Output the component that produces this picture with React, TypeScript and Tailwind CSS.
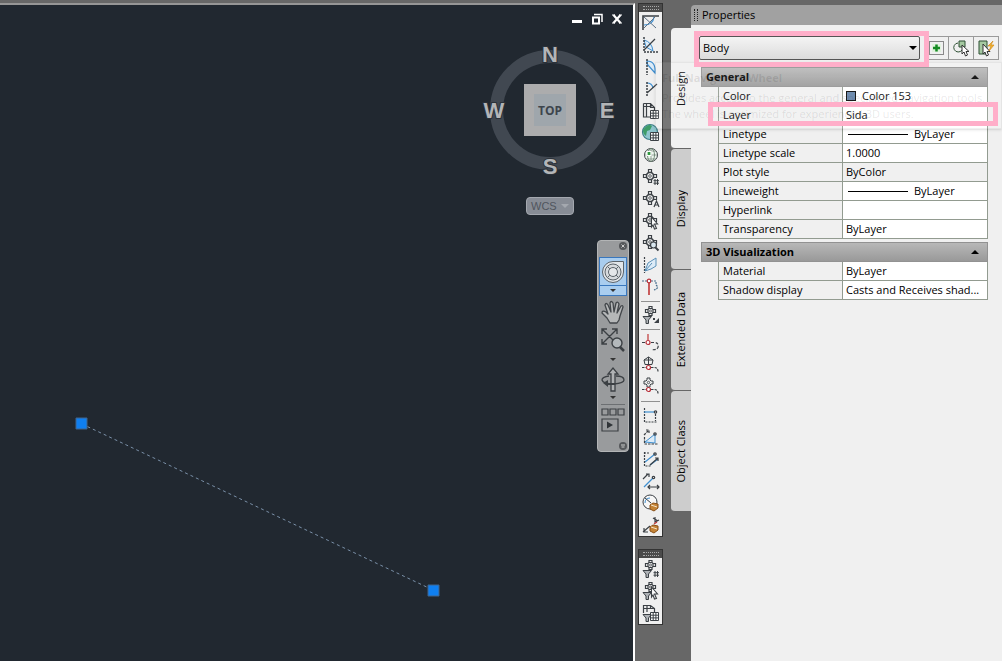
import { useState } from "react";
import type { ReactNode } from "react";

const DARK = "#3b4045";
const BLUE = "#3f8fd0";

type IconProps = { children: ReactNode };

const Icon = ({ children }: IconProps) => (
  <svg className="h-5 w-5" viewBox="0 0 20 20" fill="none" stroke={DARK} strokeWidth="1.2" aria-hidden="true">
    {children}
  </svg>
);

const Gear = () => (
  <>
    <path d="M7.500 5.500v-3h3v3M7.500 12.500v3h3v-3M5.500 7.500h-3v3h3M12.500 7.500h3v3h-3" />
    <path d="M5.500 7.500l2-2h3l2 2v3l-2 2h-3l-2-2z" strokeWidth="1.600" />
    <circle cx="9" cy="9" r="1.300" fill="#fff" strokeWidth=".8" />
  </>
);

const Grid = () => (
  <path d="M9.500 9.500h8v8h-8zM12.200 9.500v8M14.900 9.500v8M9.500 12.200h8M9.500 14.900h8" fill="#fff" strokeWidth="1" />
);

const Hash = () => <path d="M14 12v6M16.500 12v6M12.500 13.700h5.500M12.500 16.200h5.500" strokeWidth="1" />;

const Cursor = () => <path d="M10.500 6l6 7h-3l2 4.500-2 .5-1.500-4-1.500 2z" fill="#fff" strokeWidth="1.100" />;

const SmallFlower = () => (
  <>
    <path d="M8 3.500v-2h3v2M8 8.500v2h3v-2M7 4.500H4.500v3H7M12 4.500h2.500v3H12" />
    <path d="M7 4.500l1-1h3l1 1v3l-1 1H8l-1-1z" />
    <circle cx="9.500" cy="6" r="1" fill="#fff" strokeWidth=".8" />
  </>
);

const Filter = () => <path d="M2 11.500h8.500l-3 3.500v3.500H5V15z" fill="#aeb2b6" strokeWidth="1" />;

const Node = () => (
  <>
    <path d="M1 12.500h4M10 12.500h3q4 0 4 4" strokeDasharray="2.500 1" />
    <circle cx="7.500" cy="12.500" r="2" fill="#fff" stroke="#b8303a" />
  </>
);

const Brush = () => (
  <>
    <path d="M9 12l3-2 5 1v4l-4 3-4-2z" fill="#c58436" stroke="#8a5118" strokeWidth="1" />
    <path d="M10 12l6 2" stroke="#f3e3c8" strokeWidth="1" />
  </>
);

const toolGroups: { name: string; icon: ReactNode }[][] = [
  [
    { name: "Construct bearing", icon: <><path d="M2 17V3h16" strokeWidth="1.600" /><path d="M3 12q9 0 10-8" stroke={BLUE} /><path d="M3 4l12 11M14 4L3 15" stroke="#5e7185" strokeWidth="1" /></> },
    { name: "Construct angle", icon: <><path d="M3 5q8 2 9 11L5 12z" fill="#dcebf7" stroke={BLUE} strokeWidth="1" /><path d="M3 2v15h15" strokeDasharray="2 1" strokeWidth="1.500" /><path d="M3 15L14 4" /></> },
    { name: "Curve", icon: <><path d="M6 4q9 0 8 12L6 7z" fill="#dcebf7" stroke={BLUE} /><path d="M6 2v16" strokeDasharray="2 1" strokeWidth="1.500" /></> },
    { name: "Deflection", icon: <><path d="M6 4q5 0 6 5" stroke={BLUE} /><path d="M6 3v15" strokeDasharray="2 1" strokeWidth="1.500" /><path d="M6 14L16 5" /></> },
    { name: "Table layout", icon: <><path d="M2.500 2.500h7l4 4V10M2.500 2.500V16H9M5.500 2.500V16M2.500 5.500h8M9.500 2.500v4h4" /><Grid /></> },
    { name: "World grid", icon: <><circle cx="9" cy="9" r="7.500" fill="#8fc5ce" stroke="#3b7d87" /><path d="M2 7q5-7 9-4l-2 4-3 1-1 5q-3-2-3-6z" fill="#3d9c67" stroke="none" /><Grid /></> },
    { name: "Coordinate system", icon: <><circle cx="10" cy="10" r="6.500" fill="#edf7ef" strokeWidth="1" /><path d="M3.500 10h13M10 3.500v13M5 6h10M5 14h10" stroke="#829087" strokeWidth=".8" /><ellipse cx="10" cy="10" rx="3.500" ry="6.500" stroke="#68806d" strokeWidth=".9" /><path d="M6 6.500h4v4H6z" fill="#319940" stroke="#fff" /></> },
    { name: "Point number", icon: <><Gear /><Hash /></> },
    { name: "Point name", icon: <><Gear /><path d="M13 18l2.500-6 2.500 6M14 16h3" /></> },
    { name: "Point select", icon: <><Gear /><Cursor /></> },
    { name: "Point search", icon: <><Gear /><circle cx="12.500" cy="12" r="3" fill="#d9e7ef" /><path d="M14.500 14.500l3 3" strokeWidth="2" /></> },
    { name: "Side shot", icon: <><path d="M3.500 2v16" strokeDasharray="2 1" /><path d="M4 16l3-8 8-5v8l-5 3zM4 16l7-8" fill="#dcebf7" stroke="#5b91b8" strokeWidth="1" /></> },
    { name: "Station offset", icon: <><path d="M8 5v13" stroke="#c03636" strokeWidth="1.600" /><path d="M1 4h5M10 4h5v4q4 3-2 5" strokeDasharray="2 1" stroke="#4a718f" /><circle cx="8" cy="4" r="1.800" fill="#fff" stroke="#b8303a" /></> },
  ],
  [{ name: "Point filter", icon: <><SmallFlower /><Filter /><path d="M12 13h2v2h-2zM18 13v5h-5z" fill={DARK} stroke="none" /></> }],
  [
    { name: "Zoom to point", icon: <><path d="M7 1v6" stroke="#c03636" /><path d="M1 9.500h3M10 9.500h3q5 0 4 5-2 3-6 2" strokeDasharray="3 1.500" /><circle cx="7" cy="9.500" r="2" fill="#fff" stroke="#b8303a" /></> },
    { name: "Instrument", icon: <><path d="M3 5l4.500-3L12 5l-1 4.500H4zM3 5h9M7.500 2v7" strokeWidth="1" /><Node /></> },
    { name: "Point object", icon: <><path d="M6 3V1h3v2l1 1h2v3h-2L9 8v2H6V8L5 7H3V4h2z" strokeWidth="1" /><circle cx="7.500" cy="5.500" r="1.200" strokeWidth=".8" /><Node /></> },
  ],
  [
    { name: "Distance", icon: <><path d="M3.500 3v14h13M14.500 9v7" strokeDasharray="2 1" /><path d="M3 7h10" stroke={BLUE} /><circle cx="14.500" cy="7" r="1.200" /></> },
    { name: "Inverse", icon: <><path d="M4 15l10-8v9z" fill="#dcebf7" stroke={BLUE} strokeWidth="1" /><path d="M3 8l4-4M5 3h3v3M3.500 10v7h14" strokeDasharray="2.500 1" /><circle cx="14" cy="7" r="1.200" /></> },
    { name: "Offset", icon: <><path d="M4 13L14 5M9 16l8-6" stroke={BLUE} /><path d="M3.500 3v14h7M3 4h6" strokeDasharray="2 1" /><circle cx="14" cy="5" r="1.200" /><path d="M9 16l8-7M14 9h3v3" /></> },
    { name: "Line distance", icon: <><path d="M2 8l5-5M5 3h3v3" /><path d="M3 16L12 7" stroke={BLUE} /><circle cx="12.500" cy="6.500" r="1.200" /><path d="M7 16h11M9 14l-2 2 2 2M16 14l2 2-2 2" /></> },
    { name: "Arc styling", icon: <><circle cx="9" cy="9" r="7" strokeWidth="1" fill="#f7f7f7" /><path d="M4 10q0-5 5-5" stroke={BLUE} strokeWidth="1" /><path d="M4 5l6 5" strokeWidth="1" /><Brush /></> },
    { name: "Line styling", icon: <><path d="M2 17l7-6M3 13v4h4M12 3l5 3M14 2v5l4-2" /><Brush /><path d="M13 9l3-2" stroke="#c03636" /></> },
  ],
];

const filterTools = [
  { name: "Filter number", icon: <><SmallFlower /><Filter /><Hash /></> },
  { name: "Filter select", icon: <><SmallFlower /><Filter /><Cursor /></> },
  { name: "Filter grid", icon: <><path d="M2.500 10V2.500h7l4 3V9M2.500 5.500h8M6 2.500V9M9.500 2.500v3h4" /><Filter /><Grid /></> },
];

type ToolBarProps = { label: string; groups: { name: string; icon: ReactNode }[][] };

const ToolBar = ({ label, groups }: ToolBarProps) => (
  <div role="toolbar" aria-label={label} className="border border-[#333] bg-[#efefef]">
    <div className="flex h-2 items-center justify-center bg-[#4b4b4b]">
      <span className="h-1 w-4 border-y border-dotted border-[#aaa]" />
    </div>
    {groups.map((group, i) => (
      <div key={i}>
        {i > 0 && (
          <div className="flex h-[6px] items-center px-[2px]">
            <div className="h-px flex-1 bg-[#909090]" />
          </div>
        )}
        {group.map((tool) => (
          <button key={tool.name} aria-label={tool.name} className="flex h-[22px] w-full items-center justify-center hover:bg-sky-100">
            <Icon>{tool.icon}</Icon>
          </button>
        ))}
      </div>
    ))}
  </div>
);

const Compass = () => (
  <svg className="absolute top-[35px] right-[13px] h-[140px] w-[140px] font-['Liberation_Sans',sans-serif]" viewBox="0 0 140 140">
    <circle cx="70" cy="70" r="53.500" fill="none" stroke="#414851" strokeWidth="13" />
    <g fill="#b3b5b7" stroke="#2b3139" strokeWidth="2" paintOrder="stroke" className="text-[22px] font-bold" textAnchor="middle">
      <text x="70" y="22">N</text>
      <text x="14" y="78">W</text>
      <text x="127" y="78">E</text>
      <text x="70" y="134">S</text>
    </g>
    <path d="M44 44h52v52H44z" fill="#acacad" />
    <path d="M54 54h32v32H54z" fill="#9fa6ac" />
    <text x="70" y="75" textAnchor="middle" fill="#3d444c" className="font-['Open_Sans',sans-serif] text-[12px] font-bold">TOP</text>
  </svg>
);

const NavArrow = () => (
  <svg className="h-1 w-1.5" viewBox="0 0 6 4" aria-hidden="true"><path d="M0 0h6L3 3z" fill="#333" /></svg>
);

const NavigationBar = () => (
  <div className="absolute top-[235px] right-[4px] flex h-[212px] w-8 flex-col items-center rounded border border-[#b3b5b6] bg-[#999b9d]">
    <button aria-label="Close navigation bar" className="self-end p-px">
      <svg className="h-2 w-2" viewBox="0 0 8 8"><circle cx="4" cy="4" r="4" fill="#55585b" /><path d="M2.500 2.500l3 3M5.500 2.500l-3 3" stroke="#ccc" /></svg>
    </button>
    <button aria-label="Full Navigation Wheel" className="mt-1.5 h-[29px] w-7 shrink-0 border border-[#3977bd] bg-[#a9cdef]">
      <svg className="m-auto h-6 w-6" viewBox="0 0 24 24" fill="#e2e6ea" stroke="#5c646b">
        <path d="M12 1.500h10.500V12A10.500 10.500 0 1 1 12 1.500z" />
        <circle cx="12" cy="12" r="8" fill="#d6dade" />
        <path d="M6.500 6.500l3 3M17.500 6.500l-3 3M6.500 17.500l3-3M17.500 17.500l-3-3" />
        <circle cx="12" cy="12" r="4.500" fill="#e4e7ea" />
      </svg>
    </button>
    <button aria-label="Wheel options" className="flex h-[10px] w-7 shrink-0 items-center justify-center border border-t-0 border-[#3977bd] bg-[#a9cdef]"><NavArrow /></button>
    <button aria-label="Pan" className="mt-0.5">
      <svg className="h-7 w-7" viewBox="0 0 28 28" fill="#b5b7b8" stroke="#42464a" strokeWidth="1.300" strokeLinejoin="round">
        <path d="M11 25l-3-5-5-5q0-3 4-1l2 2-3-9q1-3 3 0l3 7-1-9q1-3 3 0l1 9 2-9q2-2 3 1l-2 9 4-7q2-1 2 1l-3 9-1 4-2 3z" />
      </svg>
    </button>
    <button aria-label="Zoom Extents">
      <svg className="h-7 w-7" viewBox="0 0 28 28" fill="none" stroke="#3c4044" strokeWidth="1.400">
        <path d="M3 3l16 16M18 3L3 18M3 8V3h5M13 3h5v5M3 13v5h5" />
        <circle cx="18" cy="17" r="5" fill="#b3b8bb" />
        <path d="M21 21l4 4" strokeWidth="2.500" />
      </svg>
    </button>
    <div className="mt-1 flex"><NavArrow /></div>
    <button aria-label="Orbit" className="mt-1">
      <svg className="h-7 w-7" viewBox="0 0 28 28" fill="none" stroke="#3c4044" strokeWidth="1.300">
        <path d="M10 10Q3 11 3 14q1 4 12 4 10-1 10-4 0-4-8-4" />
        <path d="M12 25V8H9l5-6 5 6h-3v17z" fill="#b0b2b4" />
        <path d="M9 14l-5 3 5 4v-2h7v-2H9z" fill="#3c4044" stroke="none" />
      </svg>
    </button>
    <div className="mt-0.5 flex"><NavArrow /></div>
    <div className="mt-1 h-px w-6 shrink-0 bg-[#6c6f72]" />
    <button aria-label="ShowMotion" className="mt-[2px]">
      <svg className="h-[26px] w-6" viewBox="0 0 24 26" fill="none" stroke="#3c4044" strokeWidth="1.200">
        <path d="M1 2h6v6H1zM9 2h6v6H9zM17 2h6v6h-6zM1 12h16v12H1z" />
        <path d="M6 14.500v7l6-3.500z" fill="#303438" stroke="none" />
      </svg>
    </button>
    <button aria-label="Navigation bar options" className="mt-auto self-end p-px">
      <svg className="h-2 w-2" viewBox="0 0 8 8"><circle cx="4" cy="4" r="4" fill="#55585b" /><path d="M2 3h4M2.500 5h3" stroke="#ccc" /></svg>
    </button>
  </div>
);

const Drawing = () => (
  <main className="min-w-0 flex-1 pt-[3px]">
    <div className="relative h-full overflow-hidden border-t-2 border-r-2 border-t-[#969696] border-r-white bg-[#212830]">
      <svg className="absolute inset-0 h-full w-full" aria-label="Selected line">
        <path d="M82 419L433 585" stroke="#7a90a8" strokeDasharray="3 3" />
        <path d="M76 413h11v11H76zM428 580h11v11h-11z" fill="#0f7ff0" stroke="#41658c" />
      </svg>
      <div className="absolute top-2 right-[10px] flex gap-2 text-white">
        <button aria-label="Minimize"><svg className="h-3 w-3" viewBox="0 0 12 12"><path d="M1 7h10v3H1z" fill="#fff" /></svg></button>
        <button aria-label="Restore"><svg className="h-3 w-3" viewBox="0 0 12 12" fill="none" stroke="#fff"><path d="M3 1.500h8V9" strokeWidth="1.500" /><path d="M2 4.500h6v6H2z" strokeWidth="2" /></svg></button>
        <button aria-label="Close"><svg className="h-3 w-3" viewBox="0 0 12 12"><path d="M2.500 2l7 8M9.500 2l-7 8" stroke="#fff" strokeWidth="2.200" /><path d="M1 2h3M8 2h3M1 10h3M8 10h3" stroke="#fff" /></svg></button>
      </div>
      <Compass />
      <button className="absolute top-[192px] right-[59px] flex h-[18px] w-12 items-center justify-between rounded border border-[#a4a8af] bg-[#878c95] px-1 font-['Liberation_Sans',sans-serif] text-[11px] text-[#50555d]">
        WCS
        <svg className="h-1 w-2" viewBox="0 0 8 4"><path d="M0 0h8L4 4z" fill="#a4a8af" /></svg>
      </button>
      <NavigationBar />
    </div>
  </main>
);

const tabs = ["Design", "Display", "Extended Data", "Object Class"];

type Property = { label: string; value: string; kind?: "swatch" | "line"; locked?: boolean };

const sections: { title: string; rows: Property[] }[] = [
  {
    title: "General",
    rows: [
      { label: "Color", value: "Color 153", kind: "swatch" },
      { label: "Layer", value: "Sida" },
      { label: "Linetype", value: "ByLayer", kind: "line" },
      { label: "Linetype scale", value: "1.0000" },
      { label: "Plot style", value: "ByColor", locked: true },
      { label: "Lineweight", value: "ByLayer", kind: "line" },
      { label: "Hyperlink", value: "" },
      { label: "Transparency", value: "ByLayer" },
    ],
  },
  {
    title: "3D Visualization",
    rows: [
      { label: "Material", value: "ByLayer" },
      { label: "Shadow display", value: "Casts and Receives shad..." },
    ],
  },
];

const PropertySection = ({ title, rows }: { title: string; rows: Property[] }) => {
  const [isOpen, setIsOpen] = useState(true);

  return (
    <section className="mb-[3px]">
      <button
        onClick={() => setIsOpen(!isOpen)}
        aria-expanded={isOpen}
        className="flex h-5 w-full items-center justify-between border border-[#929292] bg-linear-to-b from-[#b8b8b8] to-[#999] px-1 leading-4 font-bold"
      >
        {title}
        <svg className="mr-1 h-1 w-2" viewBox="0 0 8 4"><path d="M0 4h8L4 0z" fill="#000" /></svg>
      </button>
      {isOpen && (
        <div className="pl-[17px]">
          <table className="w-full table-fixed border-separate border-spacing-0 border-l border-[#929b90]">
            <tbody>
              {rows.map((row) => {
                const id = row.label.toLowerCase().replace(/ /g, "-");
                return (
                  <tr key={row.label}>
                    <th scope="row" className="h-[19px] w-[124px] border-r border-b border-[#929b90] p-0 pl-1 text-left font-normal">
                      <label htmlFor={id} className="block leading-4">{row.label}</label>
                    </th>
                    <td className={row.locked ? "border-r border-b border-[#929b90] p-0" : "border-r border-b border-[#929b90] bg-white p-0"}>
                      <div className="flex h-[18px] items-center pl-[3px]">
                        {row.kind === "swatch" && <span className="mr-1.5 h-[10px] w-[10px] shrink-0 border border-black bg-[#5f7fa5]" />}
                        {row.kind === "line" && <span className="mr-1.5 ml-0.5 h-px w-15 shrink-0 bg-black" />}
                        <input id={id} defaultValue={row.value} readOnly={row.locked} className="w-full min-w-0 bg-transparent leading-4 outline-none" />
                      </div>
                    </td>
                  </tr>
                );
              })}
            </tbody>
          </table>
        </div>
      )}
    </section>
  );
};

const Tooltip = () => (
  <div className="pointer-events-none absolute top-[62px] right-0 left-[-16px] h-[67px] border border-black/5 bg-white/10 pt-[7px] pl-1.5 leading-4 whitespace-nowrap text-black/10 shadow-sm">
    <p className="mb-1 font-bold">Full Navigation Wheel</p>
    <p>Provides access to the general and specialized navigation tools.</p>
    <p>The wheel is optimized for experienced 3D users.</p>
  </div>
);

const PropertiesPalette = () => {
  const [activeTab, setActiveTab] = useState("Design");

  return (
    <aside className="relative flex w-[331px] shrink-0 font-['Open_Sans','Noto_Sans',sans-serif] text-[11px] leading-4 text-black">
      <div role="tablist" aria-orientation="vertical" className="w-5 pt-7">
        {tabs.map((tab) => (
          <button
            key={tab}
            role="tab"
            aria-selected={activeTab === tab}
            onClick={() => setActiveTab(tab)}
            className={
              activeTab === tab
                ? "flex h-[121px] w-full items-center justify-center rounded-l-sm border-b border-[#666] bg-[#f0f0f0]"
                : "flex h-[121px] w-full items-center justify-center rounded-l-sm border-b border-[#666] bg-[#cdcdcd]"
            }
          >
            <span className="rotate-180 [writing-mode:vertical-rl]">{tab}</span>
          </button>
        ))}
      </div>
      <div className="flex min-w-0 flex-1 flex-col pt-[5px]">
        <header className="flex h-5 items-center gap-1 rounded-tl-sm bg-[#a1a1a1] pl-[3px]">
          <span className="h-3 w-1 border-x border-dotted border-[#222]" />
          <h1>Properties</h1>
        </header>
        <div className="flex-1 bg-[#f0f0f0] pt-[11px] pr-[3px] pl-2">
          <div className="flex h-6">
            <div className="relative min-w-0 flex-1">
              <select aria-label="Object type" className="h-full w-full appearance-none rounded-xs border border-[#555] bg-linear-to-b from-[#f4f4f4] to-[#dcdcdc] pl-[3px]">
                <option>Body</option>
              </select>
              <svg className="pointer-events-none absolute top-[10px] right-[3px] h-1 w-2" viewBox="0 0 8 4"><path d="M0 0h8L4 4z" fill="#000" /></svg>
            </div>
            <div className="ml-1 flex border border-[#9a9a9a]">
              <button aria-label="Toggle PICKADD" className="flex w-6 items-center justify-center border-r border-[#9a9a9a]">
                <svg className="h-5 w-5" viewBox="0 0 20 20" fill="none"><path d="M2.500 3.500h14v13h-14z" stroke="#222" strokeDasharray="1 1" /><path d="M5 6h9v8H5z" fill="#dff2dc" /><path d="M9.500 6.500v7M6 10h7" stroke="#168a23" strokeWidth="2.500" /></svg>
              </button>
              <button aria-label="Select Objects" className="flex w-[25px] items-center justify-center border-r border-[#9a9a9a]">
                <svg className="h-5 w-5" viewBox="0 0 20 20" fill="none" stroke="#2f5134"><path d="M8 3h6v6H8z" fill="#a5c9a1" /><path d="M7 5a4.500 4.500 0 1 0 4 7" /><path d="M11 7v9l2-2 1.500 4 2-1-1.500-3.500h3z" fill="#fff" stroke="#333" /></svg>
              </button>
              <button aria-label="Quick Select" className="flex w-6 items-center justify-center">
                <svg className="h-5 w-5" viewBox="0 0 20 20" fill="none" stroke="#2f5134"><path d="M3 3h8v13H3z" fill="#a5c9a1" /><path d="M7 6v10l2-2 1.500 4 2-1-1.500-3.500h3z" fill="#fff" stroke="#333" /><path d="M17 3l-5 5h3l-2 5 5-6h-3z" fill="#f5b62d" stroke="#d18b1b" strokeWidth=".7" /></svg>
              </button>
            </div>
          </div>
          <div className="mt-[7px] pr-[11px] pl-[2px]">
            {sections.map((section) => (
              <PropertySection key={section.title} title={section.title} rows={section.rows} />
            ))}
          </div>
        </div>
      </div>
      <Tooltip />
      {/* callout frames around the object type and the layer row */}
      <div className="pointer-events-none absolute top-[31px] right-[73px] left-[23px] h-9 border-[5px] border-[#ffaec9]" />
      <div className="pointer-events-none absolute top-[102px] right-[4px] left-[37px] h-6 border-[5px] border-[#ffaec9]" />
    </aside>
  );
};

export default function App() {
  return (
    <div className="flex min-h-screen bg-[#676767]">
      <Drawing />
      <div className="mr-2 ml-[3px] flex w-[25px] shrink-0 flex-col gap-3 pt-[3px]">
        <ToolBar label="Transparent commands" groups={toolGroups} />
        <ToolBar label="Point filters" groups={[filterTools]} />
      </div>
      <PropertiesPalette />
    </div>
  );
}
